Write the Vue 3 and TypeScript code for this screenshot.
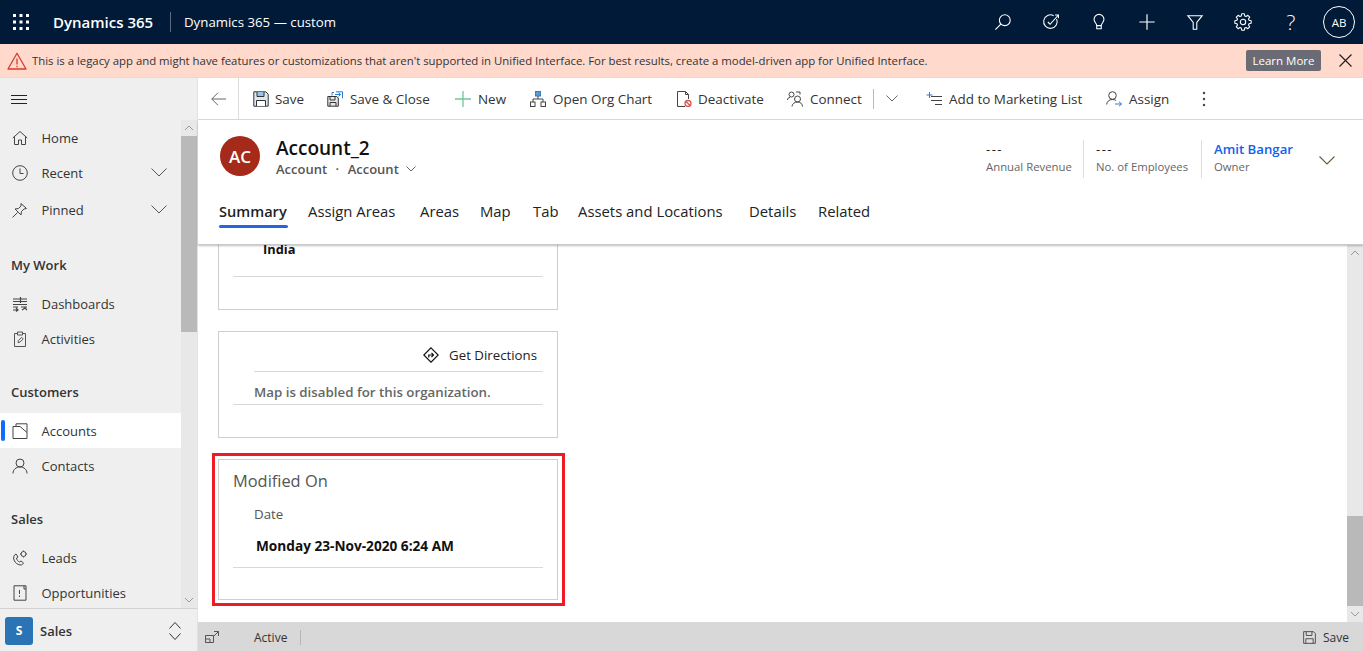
<script setup lang="ts">
const tabs: { label: string; cls: string }[] = [
  { label: 'Summary', cls: 'tab active w-sum' },
  { label: 'Assign Areas', cls: 'tab w-assign' },
  { label: 'Areas', cls: 'tab w-areas' },
  { label: 'Map', cls: 'tab w-map' },
  { label: 'Tab', cls: 'tab w-tab' },
  { label: 'Assets and Locations', cls: 'tab w-assets' },
  { label: 'Details', cls: 'tab w-details' },
  { label: 'Related', cls: 'tab' },
]

function gearPath(teeth: number, outer: number, inner: number): string {
  const pts: string[] = []
  const step = (Math.PI * 2) / teeth
  for (let i = 0; i < teeth; i++) {
    const a = i * step
    const list: [number, number][] = [
      [inner, a - step * 0.36],
      [outer, a - step * 0.2],
      [outer, a + step * 0.2],
      [inner, a + step * 0.36],
    ]
    for (const [r, t] of list) {
      pts.push(`${(10 + r * Math.cos(t)).toFixed(2)} ${(10 + r * Math.sin(t)).toFixed(2)}`)
    }
  }
  return 'M' + pts.join('L') + 'Z'
}
const gear = gearPath(8, 9.2, 7)
</script>

<template>
  <div class="app">
    <header class="topbar">
      <svg class="waffle" width="16" height="16" viewBox="0 0 16 16" fill="#fff">
        <rect x="0" y="0" width="3" height="3" /><rect x="6.500" y="0" width="3" height="3" /><rect x="13" y="0" width="3" height="3" />
        <rect x="0" y="6.500" width="3" height="3" /><rect x="6.500" y="6.500" width="3" height="3" /><rect x="13" y="6.500" width="3" height="3" />
        <rect x="0" y="13" width="3" height="3" /><rect x="6.500" y="13" width="3" height="3" /><rect x="13" y="13" width="3" height="3" />
      </svg>
      <span class="brand">Dynamics 365</span>
      <span class="brand-sep"></span>
      <span class="appname">Dynamics 365 — custom</span>
      <div class="top-icons">
        <svg class="ti" viewBox="0 0 20 20" fill="none" stroke="#fff" stroke-width="1.2"><circle cx="12" cy="8" r="6" /><path d="M7.600 12.400L1.500 18.500" /></svg>
        <svg class="ti" viewBox="0 0 20 20" fill="none" stroke="#fff" stroke-width="1.2"><path d="M16.200 6.500A7.500 7.500 0 1 1 13 3" /><path d="M6.500 10l2.500 2.500L18 2.500M14.500 2.200h3.800v3.600" /></svg>
        <svg class="ti" viewBox="0 0 20 20" fill="none" stroke="#fff" stroke-width="1.2"><path d="M7.500 14c0-2.500-3-3.500-3-7a5.500 5.500 0 0 1 11 0c0 3.500-3 4.500-3 7z" /><path d="M7.500 14v3.500h5V14" /></svg>
        <svg class="ti" viewBox="0 0 20 20" fill="none" stroke="#fff" stroke-width="1.3"><path d="M10 1.500v17M1.500 10h17" /></svg>
        <svg class="ti" viewBox="0 0 20 20" fill="none" stroke="#fff" stroke-width="1.2"><path d="M2 3h16l-6 7.500V18H8v-7.500z" /></svg>
        <svg class="ti" viewBox="0 0 20 20" fill="none" stroke="#fff" stroke-width="1.2"><path :d="gear" stroke-linejoin="round" /><circle cx="10" cy="10" r="3" /></svg>
        <span class="ti help">?</span>
        <span class="avatar-top">AB</span>
      </div>
    </header>

    <div class="banner">
      <svg class="warn" width="20" height="18" viewBox="0 0 20 18" fill="none" stroke="#d83b2b" stroke-width="1.300"><path d="M10 1.200L19 17H1z" stroke-linejoin="round" /><path d="M10 6.500v6M10 13.800v1.400" /></svg>
      <span class="banner-text">This is a legacy app and might have features or customizations that aren't supported in Unified Interface. For best results, create a model-driven app for Unified Interface.</span>
      <button class="learn">Learn More</button>
      <svg class="close" width="13" height="13" viewBox="0 0 13 13" stroke="#222" stroke-width="1.200"><path d="M.5.500l12 12M12.500.500l-12 12" /></svg>
    </div>

    <div class="body">
      <aside class="sidebar">
        <div class="burger"><svg width="16" height="9" viewBox="0 0 16 9" stroke="#222" stroke-width="1"><path d="M0 .500h16M0 4.500h16M0 8.500h16" /></svg></div>
        <div class="side-scroll">
          <div class="side-main">
            <div class="nav-item">
              <svg class="ni" viewBox="0 0 16 16" fill="none" stroke="#444"><path d="M.8 8L8 1.500 15.200 8M2.500 7v7.500h4V10h3v4.500h4V7" /></svg>
              <span>Home</span>
            </div>
            <div class="nav-item">
              <svg class="ni" viewBox="0 0 16 16" fill="none" stroke="#444"><circle cx="8" cy="8" r="7.300" /><path d="M8 3.500V8.500H11.500" /></svg>
              <span>Recent</span>
              <svg class="nav-chev" width="16" height="9" viewBox="0 0 16 9" fill="none" stroke="#555"><path d="M.5.500L8 8l7.500-7.500" /></svg>
            </div>
            <div class="nav-item pinned">
              <svg class="ni" viewBox="0 0 16 16" fill="none" stroke="#444"><path d="M.5 15.500l5-5M9 1.500l5.500 5-2.500.5-2.500 2.500-.5 3.500-6-6 3.500-.5L9 4z" /></svg>
              <span>Pinned</span>
              <svg class="nav-chev" width="16" height="9" viewBox="0 0 16 9" fill="none" stroke="#555"><path d="M.5.500L8 8l7.500-7.500" /></svg>
            </div>

            <div class="nav-group g-work">My Work</div>
            <div class="nav-item">
              <svg class="ni" viewBox="0 0 16 16" fill="none" stroke="#444" stroke-width="1.200"><path d="M1 3h14M1 5.500h14M1 8.500h14M8.500 1v6M1 11h5M9 11h6M1 14h5M4 12l2 2-2 1.500M10 14l3-2 2 2" /></svg>
              <span>Dashboards</span>
            </div>
            <div class="nav-item">
              <svg class="ni" viewBox="0 0 16 16" fill="none" stroke="#555"><path d="M5 2.500H2.500v13h11v-13H11" /><path d="M5.500 1h5v3h-5zM6 11.500l.4-2 3.200-3.200 1.600 1.600L8 11.100z" /></svg>
              <span>Activities</span>
            </div>

            <div class="nav-group g-cust">Customers</div>
            <div class="nav-item selected">
              <span class="sel-bar"></span>
              <svg class="ni" viewBox="0 0 16 16" fill="none" stroke="#444"><path d="M1 15.500V3.500h7l7 6v6zM4 3.500V.800h11v8.700" /></svg>
              <span>Accounts</span>
            </div>
            <div class="nav-item">
              <svg class="ni" viewBox="0 0 16 16" fill="none" stroke="#444"><circle cx="8" cy="5" r="4" /><path d="M1 15.500c0-4 3-6.500 7-6.500s7 2.500 7 6.500" /></svg>
              <span>Contacts</span>
            </div>

            <div class="nav-group g-sales">Sales</div>
            <div class="nav-item">
              <svg class="ni" viewBox="0 0 16 16" fill="none" stroke="#444"><path d="M4 4c-2 1-3 3-2 6s4 5 7 5c1 0 2-1 2.500-2L9 11l-1.500 1C6 11.500 4.500 9.500 4.500 8L6 7z" /><circle cx="11.500" cy="4" r="2.500" /><path d="M11.500.500v1M11.500 6.500v1M15 4h-1M9 4H8" /></svg>
              <span>Leads</span>
            </div>
            <div class="nav-item">
              <svg class="ni" viewBox="0 0 16 16" fill="none" stroke="#444"><path d="M2 .800h12v14.400H2zM12 .800v3.200h2" /><path d="M7.500 5v4M7.500 10.500v1.500" /></svg>
              <span>Opportunities</span>
            </div>
          </div>
          <div class="scrollbar">
            <svg class="sb-arrow" viewBox="0 0 16 16" fill="none" stroke="#999"><path d="M4 10l4-4 4 4" /></svg>
            <div class="side-thumb"></div>
            <div class="sb-fill"></div>
            <svg class="sb-arrow" viewBox="0 0 16 16" fill="none" stroke="#999"><path d="M4 6l4 4 4-4" /></svg>
          </div>
        </div>
        <div class="switcher">
          <span class="sw-badge">S</span>
          <span class="sw-name">Sales</span>
          <svg width="14" height="20" viewBox="0 0 14 20" fill="none" stroke="#333"><path d="M1.500 7.500L7 1.500l5.500 6M1.500 12.500l5.500 6 5.500-6" /></svg>
        </div>
      </aside>

      <main class="main">
        <div class="commandbar">
          <div class="back"><svg width="15" height="14" viewBox="0 0 15 14" fill="none" stroke="#666"><path d="M7 .700L.8 7 7 13.300M.8 7H15" /></svg></div>
          <div class="cmd c-save">
            <svg class="ci" viewBox="0 0 16 16"><path d="M.8.800h12l2.400 2.400v12H.8z" fill="#dce9f5" stroke="#333" /><path d="M4 1v4.500h7V1" fill="#9cc3e6" stroke="#333" /><path d="M3.500 15v-5.500h9V15" fill="#fff" stroke="#333" /></svg>
            <span>Save</span>
          </div>
          <div class="cmd c-close">
            <svg class="ci" viewBox="0 0 16 16"><path d="M.8 5.500h9l1.500 1.500v8.200H.8z" fill="#e8e8e8" stroke="#333" /><path d="M3 6v3h5V6M3 15v-3.500h6V15" fill="none" stroke="#333" /><path d="M7 1.500h-2v3M9 .800h6.500v6.500M8 3.500h5.500M11.500 1.500l2 2-2 2" fill="none" stroke="#2b7cd3" /></svg>
            <span>Save &amp; Close</span>
          </div>
          <div class="cmd c-new">
            <svg class="ci" viewBox="0 0 16 16" fill="none" stroke="#6fc79a" stroke-width="1.300"><path d="M8 0v16M0 8h16" /></svg>
            <span>New</span>
          </div>
          <div class="cmd c-org">
            <svg class="ci" viewBox="0 0 16 16" fill="none" stroke="#444"><rect x="5.500" y=".500" width="5" height="4.500" fill="#5b9bd5" stroke="#2b7cd3" /><path d="M8 5v3M3 11V8h10v3" /><rect x=".500" y="11" width="4.500" height="4.500" /><rect x="11" y="11" width="4.500" height="4.500" /></svg>
            <span>Open Org Chart</span>
          </div>
          <div class="cmd c-deact">
            <svg class="ci" viewBox="0 0 16 16" fill="none" stroke="#444"><path d="M9 15.500H1.500V.500h8l3 3V8M9.500.500V3.500h3" /><circle cx="12" cy="12.500" r="3" stroke="#d9534f" stroke-width="1.300" /><path d="M10 10.500l4 4" stroke="#d9534f" stroke-width="1.200" /></svg>
            <span>Deactivate</span>
          </div>
          <div class="cmd c-conn">
            <svg class="ci" viewBox="0 0 16 16" fill="none" stroke="#444"><circle cx="4.500" cy="3.500" r="2.500" /><circle cx="10.500" cy="8" r="3" /><path d="M.5 9c0-1.500 1-2.500 2.500-2.500M5 15.500c0-2.500 2.500-4.500 5.500-4.500s5 2 5 4.500M9 1h4v2.500" /></svg>
            <span>Connect</span>
          </div>
          <span class="cmd-sep"></span>
          <svg class="cmd-chev" width="12" height="7" viewBox="0 0 12 7" fill="none" stroke="#666"><path d="M.5.500L6 6l5.500-5.500" /></svg>
          <div class="cmd c-mkt">
            <svg class="ci" viewBox="0 0 16 16" fill="none" stroke="#444"><path d="M5 5.500h11M5 9.500h11M9 13.500h7" /><path d="M3.500 1v6M.5 4h6" stroke="#2b7cd3" /></svg>
            <span>Add to Marketing List</span>
          </div>
          <div class="cmd c-assign">
            <svg class="ci" viewBox="0 0 16 16" fill="none" stroke="#444"><circle cx="6.500" cy="4.500" r="3.800" /><path d="M.7 13.500c0-3 2.500-5 5.800-5 1.500 0 2.700.4 3.500 1" /><path d="M9 13h6.500M13 10.700l2.500 2.300-2.500 2.300" stroke="#2b7cd3" /></svg>
            <span>Assign</span>
          </div>
          <svg class="kebab" width="4" height="16" viewBox="0 0 4 16" fill="#444"><circle cx="2" cy="2" r="1.200" /><circle cx="2" cy="8" r="1.200" /><circle cx="2" cy="14" r="1.200" /></svg>
        </div>

        <section class="rec-header">
          <div class="rec-top">
            <div class="rec-avatar">AC</div>
            <div class="rec-titles">
              <div class="rec-title">Account_2</div>
              <div class="rec-sub">
                <span>Account</span><span class="dot">·</span><span>Account</span>
                <svg width="10" height="6" viewBox="0 0 10 6" fill="none" stroke="#666"><path d="M.5.500L5 5l4.500-4.500" /></svg>
              </div>
            </div>
            <div class="rec-fields">
              <div class="rf rf-rev"><div class="rf-val">---</div><div class="rf-lab">Annual Revenue</div></div>
              <div class="rf rf-emp"><div class="rf-val">---</div><div class="rf-lab">No. of Employees</div></div>
              <div class="rf rf-own"><div class="rf-link">Amit Bangar</div><div class="rf-lab">Owner</div></div>
              <svg class="rf-chev" width="16" height="9" viewBox="0 0 16 9" fill="none" stroke="#6b5a3a" stroke-width="1.100"><path d="M.5.500L8 8l7.500-7.500" /></svg>
            </div>
          </div>
          <nav class="tabs">
            <span v-for="t in tabs" :key="t.label" :class="t.cls">{{ t.label }}</span>
          </nav>
        </section>

        <div class="content-wrap">
          <div class="content">
            <div class="card card-a">
              <div class="india">India</div>
              <div class="rule"></div>
            </div>
            <div class="card card-b">
              <div class="dir-row">
                <svg width="16" height="16" viewBox="0 0 16 16" fill="none" stroke="#111" stroke-width="1.200"><path d="M8 .800L15.200 8 8 15.200.800 8z" /><path d="M5.800 10.500V8h4M8.500 5.800L10.500 8l-2 2.200" /></svg>
                <span>Get Directions</span>
              </div>
              <div class="map-msg">Map is disabled for this organization.</div>
            </div>
            <div class="highlight">
              <div class="card card-c">
                <div class="sec-title">Modified On</div>
                <div class="date-lab">Date</div>
                <div class="date-val">Monday 23-Nov-2020 6:24 AM</div>
                <div class="rule"></div>
              </div>
            </div>
          </div>
          <div class="scrollbar">
            <svg class="sb-arrow" viewBox="0 0 16 16" fill="none" stroke="#999"><path d="M4 10l4-4 4 4" /></svg>
            <div class="main-fill"></div>
            <div class="main-thumb"></div>
            <svg class="sb-arrow" viewBox="0 0 16 16" fill="none" stroke="#999"><path d="M4 6l4 4 4-4" /></svg>
          </div>
        </div>

        <footer class="status">
          <svg width="14" height="12" viewBox="0 0 14 12" fill="none" stroke="#555"><path d="M.5 4.500h8v7h-8zM.5 8h4.500v3.500M9 .500h4.500V5M13.500.500L9 5" /></svg>
          <span class="st-active">Active</span>
          <span class="st-sep"></span>
          <span class="st-save">
            <svg class="ci-s" viewBox="0 0 16 16"><path d="M.8.800h12l2.400 2.400v12H.8z" fill="#ddd" stroke="#333" /><path d="M4 1v4.500h7V1" fill="none" stroke="#333" /><path d="M3.500 15v-5.500h9V15" fill="none" stroke="#333" /></svg>
            Save
          </span>
        </footer>
      </main>
    </div>
  </div>
</template>

<style>
html, body { margin: 0; padding: 0; overflow: hidden; }
</style>

<style scoped>
.app { width: 1363px; height: 651px; display: flex; flex-direction: column; overflow: hidden; font-family: "Open Sans", "Noto Sans", sans-serif; font-size: 13px; color: #333; background: #fff; }
.topbar { height: 44px; flex: none; background: #001a38; color: #fff; display: flex; align-items: center; padding-left: 13px; }
.waffle { flex: none; }
.brand { margin-left: 24px; font-size: 15px; font-weight: 600; width: 100px; white-space: nowrap; }
.brand-sep { width: 1px; height: 20px; background: #5b6b80; margin: 0 13px 0 17px; }
.appname { font-size: 13.250px; white-space: nowrap; }
.top-icons { margin-left: auto; display: flex; align-items: center; padding-right: 8px; }
.ti { width: 18px; height: 18px; margin-right: 30px; flex: none; }
.help { font-size: 21px; line-height: 18px; text-align: center; font-weight: 300; margin-right: 23px; }
.avatar-top { width: 30px; height: 30px; border: 1px solid #fff; border-radius: 50%; display: flex; align-items: center; justify-content: center; font-size: 11.500px; }
.banner { height: 34px; flex: none; box-sizing: border-box; background: #fed9cc; border-bottom: 1px solid #dcdcdc; display: flex; align-items: center; padding-left: 7px; }
.warn { flex: none; }
.banner-text { margin-left: 5px; font-size: 11.360px; color: #333; white-space: nowrap; width: 1214px; }
.learn { width: 75px; height: 21px; border: 0; border-radius: 2px; padding: 0; background: #6b6b75; color: #fff; font: 11.500px "Open Sans", sans-serif; flex: none; }
.close { margin-left: 18px; flex: none; }
.body { flex: 1; min-height: 0; display: flex; }
.sidebar { width: 198px; flex: none; box-sizing: border-box; border-right: 1px solid #e2e2e2; background: #efefef; display: flex; flex-direction: column; }
.burger { height: 42px; flex: none; padding-left: 11px; display: flex; align-items: center; box-sizing: border-box; }
.side-scroll { flex: 1; min-height: 0; display: flex; }
.side-main { flex: 1; min-width: 0; overflow: hidden; position: relative; }
.nav-item { height: 35px; display: flex; align-items: center; padding-left: 12px; font-size: 13px; color: #333; position: relative; box-sizing: border-box; }
.nav-item.pinned { margin-top: 2px; }
.ni { width: 16px; height: 16px; flex: none; margin-right: 13.500px; }
.nav-chev { position: absolute; left: 151px; top: 13px; }
.nav-group { font-size: 13px; font-weight: 600; color: #333; padding-left: 11px; height: 18px; line-height: 18px; }
.g-work { margin-top: 29px; margin-bottom: 12px; }
.g-cust { margin-top: 27px; margin-bottom: 12px; }
.g-sales { margin-top: 27px; margin-bottom: 12px; }
.selected { background: #fff; }
.sel-bar { position: absolute; left: 1px; top: 7px; width: 4px; height: 21px; border-radius: 2px; background: #0f6cff; }
.scrollbar { width: 16px; flex: none; background: #e8e8e8; display: flex; flex-direction: column; }
.sb-arrow { width: 16px; height: 16px; flex: none; }
.side-thumb { height: 196px; background: #b9b9b9; flex: none; }
.sb-fill, .main-fill { flex: 1; }
.main-thumb { height: 90px; background: #b9b9b9; flex: none; }
.switcher { height: 43px; flex: none; border-top: 1px solid #d2d2d2; box-sizing: border-box; display: flex; align-items: center; padding: 1px 0 0 5px; }
.sw-badge { width: 28px; height: 28px; border-radius: 3px; background: #2a74b5; color: #fff; font-size: 12px; font-weight: 700; display: flex; align-items: center; justify-content: center; }
.sw-name { margin-left: 7px; font-size: 13px; font-weight: 600; width: 128px; }
.main { flex: 1; min-width: 0; display: flex; flex-direction: column; }
.commandbar { height: 42px; flex: none; box-sizing: border-box; border-bottom: 1px solid #dcdcdc; display: flex; align-items: center; }
.back { width: 40px; height: 41px; border-right: 1px solid #dcdcdc; display: flex; align-items: center; justify-content: center; flex: none; margin-right: 14px; }
.cmd { display: flex; align-items: center; font-size: 13.450px; color: #333; white-space: nowrap; flex: none; }
.ci { width: 16px; height: 16px; margin-right: 7px; flex: none; }
.c-save { width: 74px; }
.c-save .ci { margin-right: 6px; }
.c-close { width: 128px; }
.c-new { width: 75px; }
.c-org { width: 146px; }
.c-deact { width: 111px; }
.c-conn { width: 86px; }
.c-deact .ci { margin-right: 6px; }
.cmd-sep { width: 1px; height: 20px; background: #bbb; flex: none; }
.cmd-chev { margin: 0 28px 0 12px; flex: none; }
.c-mkt { width: 180px; }
.c-assign { width: 97px; }
.kebab { flex: none; margin-left: -1px; }
.rec-header { height: 125px; flex: none; box-sizing: border-box; border-bottom: 1px solid #c8c8c8; box-shadow: 0 1px 2px rgba(0,0,0,.25); position: relative; z-index: 2; background: #fff; padding: 16px 0 0 21px; }
.rec-top { display: flex; height: 40px; position: relative; }
.rec-avatar { width: 40px; height: 40px; margin-left: 1px; border-radius: 50%; background: #a52a1a; color: #fff; display: flex; align-items: center; justify-content: center; font-size: 17px; font-weight: 600; flex: none; }
.rec-titles { margin-left: 16px; }
.rec-title { font-size: 19px; font-weight: 600; color: #111; line-height: 24px; }
.rec-sub { display: flex; align-items: center; font-size: 13px; font-weight: 600; color: #555; line-height: 18px; }
.dot { margin: 0 8.500px; }
.rec-sub svg { margin-left: 7px; }
.rec-fields { margin-left: auto; display: flex; align-items: flex-start; padding-right: 28px; margin-top: 4px; }
.rf { height: 38px; box-sizing: border-box; }
.rf-rev { width: 98px; border-right: 1px solid #ddd; }
.rf-emp { width: 118px; border-right: 1px solid #ddd; padding-left: 12px; }
.rf-own { width: 117px; padding-left: 12px; }
.rf-val { font-size: 13px; letter-spacing: 1.500px; line-height: 19px; color: #222; }
.rf-lab { font-size: 11.350px; line-height: 15px; color: #666; white-space: nowrap; }
.rf-link { font-size: 13.200px; font-weight: 600; color: #1160ee; line-height: 19px; white-space: nowrap; }
.rf-chev { margin-top: 16px; }
.tabs { display: flex; margin-top: 24px; }
.tab { font-size: 14.850px; color: #222; position: relative; line-height: 22px; white-space: nowrap; flex: none; }
.tab.active { font-size: 14.600px; font-weight: 600; }
.tab.active::after { content: ""; position: absolute; left: 0; right: 0; top: 25px; height: 3px; border-radius: 2px; background: #2266e3; }
.w-sum { width: 89px; }
.tab.active.w-sum::after { right: 20px; }
.w-assign { width: 112px; }
.w-areas { width: 60px; }
.w-map { width: 53px; }
.w-tab { width: 45px; }
.w-assets { width: 171px; }
.w-details { width: 69px; }
.content-wrap { flex: 1; min-height: 0; display: flex; }
.content { flex: 1; min-width: 0; overflow: hidden; padding-left: 20px; }
.card { width: 340px; box-sizing: border-box; border: 1px solid #cfcfcf; background: #fff; }
.rule { height: 1px; background: #d8d8d8; margin: 0 14px; }
.card-a { height: 85px; margin-top: -20px; padding-top: 13px; }
.india { font-size: 12.800px; font-weight: 700; color: #111; padding-left: 44px; line-height: 20px; height: 37px; }
.card-b { height: 107px; margin-top: 21px; }
.dir-row { margin: 0 14px 0 35px; height: 40px; border-bottom: 1px solid #d8d8d8; box-sizing: border-box; display: flex; align-items: center; justify-content: flex-end; padding-right: 6px; font-size: 13.250px; color: #222; padding-top: 7px; }
.dir-row svg { margin-right: 10px; }
.map-msg { margin: 0 14px; padding-left: 21px; height: 33px; box-sizing: border-box; border-bottom: 1px solid #d8d8d8; font-size: 13.300px; font-weight: 600; color: #666; line-height: 41px; white-space: nowrap; overflow: visible; }
.highlight { width: 353px; box-sizing: border-box; margin: 15px 0 0 -6px; border: 3px solid #ed1c24; padding: 3px; height: 153px; }
.card-c { height: 141px; margin: 0; width: 340px; }
.sec-title { font-size: 16.400px; color: #555; margin-left: 14px; line-height: 22px; margin-top: 10px; }
.date-lab { font-size: 13.300px; color: #555; margin-left: 35px; line-height: 18px; margin-top: 13px; }
.date-val { font-size: 13.650px; font-weight: 700; color: #111; margin-left: 37px; line-height: 20px; margin-top: 13px; white-space: nowrap; }
.card-c .rule { margin-top: 11px; }
.status { height: 29px; flex: none; background: #d8d8d8; display: flex; align-items: center; padding: 1px 0 0 7px; box-sizing: border-box; font-size: 12px; color: #333; }
.st-active { margin-left: 35px; }
.st-sep { width: 1px; height: 15px; background: #b5b5b5; margin-left: 13px; }
.st-save { margin-left: auto; padding-right: 14px; display: flex; align-items: center; }
.ci-s { width: 13px; height: 13px; margin-right: 7px; }
</style>
